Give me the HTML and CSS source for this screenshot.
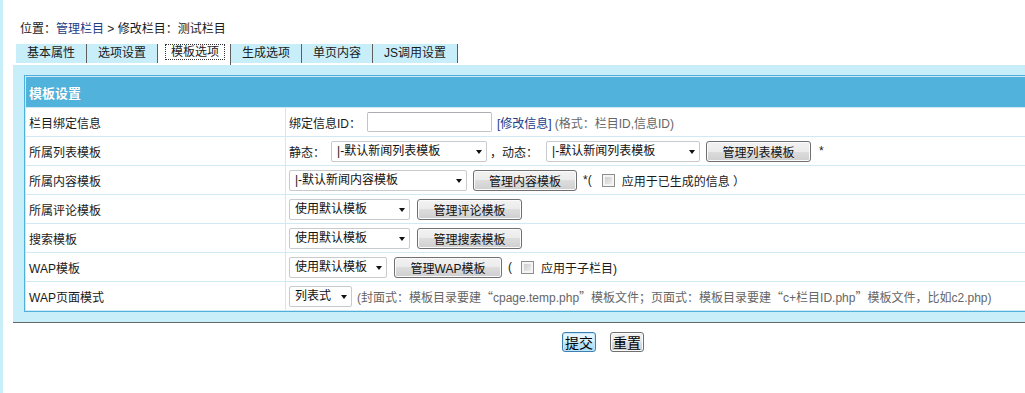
FILE: index.html
```html
<!DOCTYPE html>
<html lang="zh-CN">
<head>
<meta charset="utf-8">
<title>修改栏目</title>
<link rel="stylesheet" href="styles.css">
</head>
<body>
<div class="page">
  <div class="crumb">位置：<a href="#" class="link">管理栏目</a> &gt; 修改栏目：测试栏目</div>
  <ul class="tabs">
    <li class="tab">基本属性</li>
    <li class="tab">选项设置</li>
    <li class="tab active"><span class="focus">模板选项</span></li>
    <li class="tab">生成选项</li>
    <li class="tab">单页内容</li>
    <li class="tab">JS调用设置</li>
  </ul>
  <div class="panel">
    <table class="form">
      <tr><th colspan="2">模板设置</th></tr>
      <tr>
        <td class="label">栏目绑定信息</td>
        <td><div class="line">
          <span>绑定信息ID：</span>
          <input class="txt ml6" type="text">
          <a href="#" class="link ml5">[修改信息]</a>
          <span class="hint ml3">(格式：栏目ID,信息ID)</span>
        </div></td>
      </tr>
      <tr>
        <td class="label">所属列表模板</td>
        <td><div class="line">
          <span>静态：</span>
          <span class="sel ml6 w156"><select><option>|-默认新闻列表模板</option></select></span>
          <span class="ml3">，动态：</span>
          <span class="sel ml8 w154"><select><option>|-默认新闻列表模板</option></select></span>
          <button class="btn ml6 w105">管理列表模板</button>
          <span class="ml8">*</span>
        </div></td>
      </tr>
      <tr>
        <td class="label">所属内容模板</td>
        <td><div class="line">
          <span class="sel w178"><select><option>|-默认新闻内容模板</option></select></span>
          <button class="btn ml6 w104">管理内容模板</button>
          <span class="ml6">*(</span>
          <input class="chk ml10" type="checkbox">
          <span class="ml7">应用于已生成的信息 ）</span>
        </div></td>
      </tr>
      <tr>
        <td class="label">所属评论模板</td>
        <td><div class="line">
          <span class="sel w121"><select><option>使用默认模板</option></select></span>
          <button class="btn ml7 w105">管理评论模板</button>
        </div></td>
      </tr>
      <tr>
        <td class="label">搜索模板</td>
        <td><div class="line">
          <span class="sel w121"><select><option>使用默认模板</option></select></span>
          <button class="btn ml7 w105">管理搜索模板</button>
        </div></td>
      </tr>
      <tr>
        <td class="label">WAP模板</td>
        <td><div class="line">
          <span class="sel w98"><select><option>使用默认模板</option></select></span>
          <button class="btn ml7 w108">管理WAP模板</button>
          <span class="ml6">(</span>
          <input class="chk ml9" type="checkbox">
          <span class="ml7">应用于子栏目)</span>
        </div></td>
      </tr>
      <tr>
        <td class="label">WAP页面模式</td>
        <td><div class="line">
          <span class="sel w63"><select><option>列表式</option></select></span>
          <span class="hint ml5">(封面式：模板目录要建<span class="q">“</span>cpage.temp.php<span class="q">”</span>模板文件；页面式：模板目录要建<span class="q">“</span>c+栏目ID.php<span class="q">”</span>模板文件，比如c2.php)</span>
        </div></td>
      </tr>
    </table>
  </div>
  <div class="actions">
    <button class="act primary">提交</button>
    <button class="act">重置</button>
  </div>
</div>
</body>
</html>
```

FILE: styles.css
```css
html, body {
  margin: 0;
  padding: 0;
  height: 100%;
  overflow: hidden;
  background: #fff;
}

body {
  border-left: 3px solid #c8eefa;
  box-sizing: border-box;
  font: 12px "Liberation Sans", "Noto Sans CJK SC", sans-serif;
  color: #1a1a1a;
}

.page {
  width: 100%;
}

.link {
  color: #1d3c88;
  text-decoration: none;
}

.hint {
  color: #666;
  white-space: nowrap;
}

.q {
  font-family: "Noto Sans CJK SC", sans-serif;
  display: inline-block;
  width: 12px;
  text-align: center;
}

.crumb {
  padding: 22px 0 0 17px;
  line-height: 15px;
  height: 15px;
}

.tabs {
  list-style: none;
  margin: 7px 0 0 13px;
  padding: 0;
  height: 21px;
  display: flex;
  align-items: flex-start;
}

.tab {
  height: 19px;
  line-height: 19px;
  padding: 0 11px;
  background: #c8eefa;
  border-right: 1px solid #5f5f5f;
  white-space: nowrap;
}

.tab.active {
  background: #fff;
  height: 21px;
  padding: 1px 6px 0 8px;
  box-sizing: border-box;
  line-height: 14px;
}

.focus {
  display: inline-block;
  padding: 0 5px;
  line-height: 14px;
  outline: 1px dotted #333;
}

.panel {
  margin-left: 10px;
  background: #c8eefa;
  padding: 10px 0 10px 11px;
  border-bottom: 1px solid #666;
  overflow: hidden;
}

.form {
  width: calc(100% + 4px);
  border: 1px solid #4fb0da;
  border-spacing: 1px;
  background: #d0e9f5;
}

.form th {
  height: 30px;
  padding: 0 3px;
  background: #51b3dc;
  color: #fff;
  font-size: 13px;
  font-weight: bold;
  text-align: left;
  text-shadow: 0 0 1px #3d94bd;
}

.form td {
  height: 28px;
  padding: 0 3px;
  background: #fff;
  vertical-align: middle;
  white-space: nowrap;
}

.form td.label {
  width: 253px;
}

.line {
  display: flex;
  align-items: center;
}

.txt {
  width: 125px;
  height: 20px;
  box-sizing: border-box;
  border: 1px solid #c2c4c8;
  border-top-color: #abadb3;
  border-radius: 2px;
  margin-top: 0;
  margin-bottom: 0;
  margin-right: 0;
  padding: 0 3px;
  background: #fff;
}

.sel {
  position: relative;
  display: inline-block;
  height: 21px;
}

.sel select {
  appearance: none;
  -webkit-appearance: none;
  width: 100%;
  height: 21px;
  box-sizing: border-box;
  margin: 0;
  padding: 0 14px 0 5px;
  border: 1px solid #c9cacd;
  border-radius: 2px;
  background: #fff;
  font: 12px "Liberation Sans", "Noto Sans CJK SC", sans-serif;
  color: #111;
}

.sel::after {
  content: "";
  position: absolute;
  right: 5px;
  top: 9px;
  border-top: 4px solid #111;
  border-left: 3px solid transparent;
  border-right: 3px solid transparent;
  pointer-events: none;
}

.btn {
  height: 21px;
  box-sizing: border-box;
  margin-top: 0;
  margin-bottom: 0;
  margin-right: 0;
  padding: 0;
  border: 1px solid #707070;
  border-radius: 3px;
  background: linear-gradient(#f2f2f2 0%, #ebebeb 50%, #dddddd 50%, #cfcfcf 100%);
  box-shadow: inset 0 0 0 1px #fbfbfb;
  font: 12px "Liberation Sans", "Noto Sans CJK SC", sans-serif;
  color: #111;
}

.chk {
  appearance: none;
  -webkit-appearance: none;
  width: 13px;
  height: 13px;
  box-sizing: border-box;
  margin-top: 0;
  margin-bottom: 0;
  margin-right: 0;
  border: 1px solid #8e8f8f;
  background: linear-gradient(135deg, #c6c6c6, #f4f4f4);
  box-shadow: inset 0 0 0 2px #f4f4f4;
}

.ml3 { margin-left: 3px; }
.ml5 { margin-left: 5px; }
.ml6 { margin-left: 6px; }
.ml7 { margin-left: 7px; }
.ml8 { margin-left: 8px; }
.ml9 { margin-left: 9px; }
.ml10 { margin-left: 10px; }

.w63 { width: 63px; }
.w98 { width: 98px; }
.w104 { width: 104px; }
.w105 { width: 105px; }
.w108 { width: 108px; }
.w121 { width: 121px; }
.w154 { width: 154px; }
.w156 { width: 156px; }
.w178 { width: 178px; }

.actions {
  display: flex;
  gap: 14px;
  padding: 9px 0 0 559px;
}

.act {
  height: 20px;
  box-sizing: border-box;
  margin: 0;
  padding: 0 2px;
  border: 1px solid #707070;
  border-radius: 3px;
  background: linear-gradient(#f2f2f2 0%, #ebebeb 50%, #dddddd 50%, #cfcfcf 100%);
  box-shadow: inset 0 0 0 1px #fbfbfb;
  font: 14px/16px "Noto Sans CJK SC", sans-serif;
  color: #000;
}

.act.primary {
  border-color: #3c7fb1;
  background: linear-gradient(#eaf6fd 0%, #d9f0fc 50%, #bee6fd 50%, #a7d9f5 100%);
  box-shadow: inset 0 0 0 1px #c4e5f6;
}
```
